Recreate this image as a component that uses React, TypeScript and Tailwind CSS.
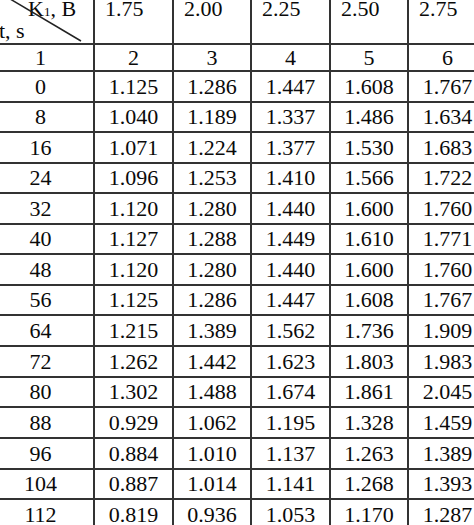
import React from "react";

type Row = { t: string; h: string; v: string[] };

const rows: Row[] = [
  { t: "0", h: "h-[31px]", v: ["1.125", "1.286", "1.447", "1.608", "1.767"] },
  { t: "8", h: "h-[30px]", v: ["1.040", "1.189", "1.337", "1.486", "1.634"] },
  { t: "16", h: "h-[31px]", v: ["1.071", "1.224", "1.377", "1.530", "1.683"] },
  { t: "24", h: "h-[30px]", v: ["1.096", "1.253", "1.410", "1.566", "1.722"] },
  { t: "32", h: "h-[31px]", v: ["1.120", "1.280", "1.440", "1.600", "1.760"] },
  { t: "40", h: "h-[30px]", v: ["1.127", "1.288", "1.449", "1.610", "1.771"] },
  { t: "48", h: "h-[31px]", v: ["1.120", "1.280", "1.440", "1.600", "1.760"] },
  { t: "56", h: "h-[30px]", v: ["1.125", "1.286", "1.447", "1.608", "1.767"] },
  { t: "64", h: "h-[31px]", v: ["1.215", "1.389", "1.562", "1.736", "1.909"] },
  { t: "72", h: "h-[31px]", v: ["1.262", "1.442", "1.623", "1.803", "1.983"] },
  { t: "80", h: "h-[30px]", v: ["1.302", "1.488", "1.674", "1.861", "2.045"] },
  { t: "88", h: "h-[31px]", v: ["0.929", "1.062", "1.195", "1.328", "1.459"] },
  { t: "96", h: "h-[31px]", v: ["0.884", "1.010", "1.137", "1.263", "1.389"] },
  { t: "104", h: "h-[30px]", v: ["0.887", "1.014", "1.141", "1.268", "1.393"] },
  { t: "112", h: "h-[31px]", v: ["0.819", "0.936", "1.053", "1.170", "1.287"] },
];

const widths = ["w-[79px]", "w-[78px]", "w-[79px]", "w-[78px]", "w-[79px]"];
const heads = ["1.75", "2.00", "2.25", "2.50", "2.75"];

const cellBase =
  "shrink-0 border-r-2 border-b-2 border-[#333] flex items-center justify-center";

export default function App() {
  return (
    <div
      className="w-[474px] h-[525px] overflow-hidden bg-white text-[#0a0a0a] text-[22px] leading-none"
      style={{ fontFamily: '"Liberation Serif", "Times New Roman", serif' }}
    >
      <div className="-ml-[12px] -mt-[10px] flex flex-col w-[600px]">
        {/* header */}
        <div className="flex h-[55px]">
          <div className="relative w-[107px] shrink-0 border-r-2 border-b-2 border-[#333] flex flex-col">
            <svg
              className="absolute left-0 top-0"
              width="105"
              height="53"
              viewBox="0 0 105 53"
            >
              <line x1="7" y1="0" x2="93" y2="51" stroke="#222" strokeWidth="1.5" />
            </svg>
            <div className="pl-[40px] pt-[8px] whitespace-nowrap">
              K<span className="text-[13px]">1</span>, B
            </div>
            <div className="pl-[11px] whitespace-nowrap">t, s</div>
          </div>
          {heads.map((h, i) => (
            <div
              key={h}
              className={`${widths[i]} shrink-0 border-r-2 border-b-2 border-[#333] pl-[10px] pt-[8px]`}
            >
              {h}
            </div>
          ))}
        </div>
        {/* numbering row */}
        <div className="flex h-[27px]">
          <div className={`w-[107px] ${cellBase}`}>1</div>
          {widths.map((w, i) => (
            <div key={i} className={`${w} ${cellBase}`}>
              {i + 2}
            </div>
          ))}
        </div>
        {rows.map((r) => (
          <div key={r.t} className={`flex ${r.h}`}>
            <div className={`w-[107px] ${cellBase}`}>{r.t}</div>
            {r.v.map((v, i) => (
              <div key={i} className={`${widths[i]} ${cellBase}`}>
                {v}
              </div>
            ))}
          </div>
        ))}
      </div>
    </div>
  );
}
